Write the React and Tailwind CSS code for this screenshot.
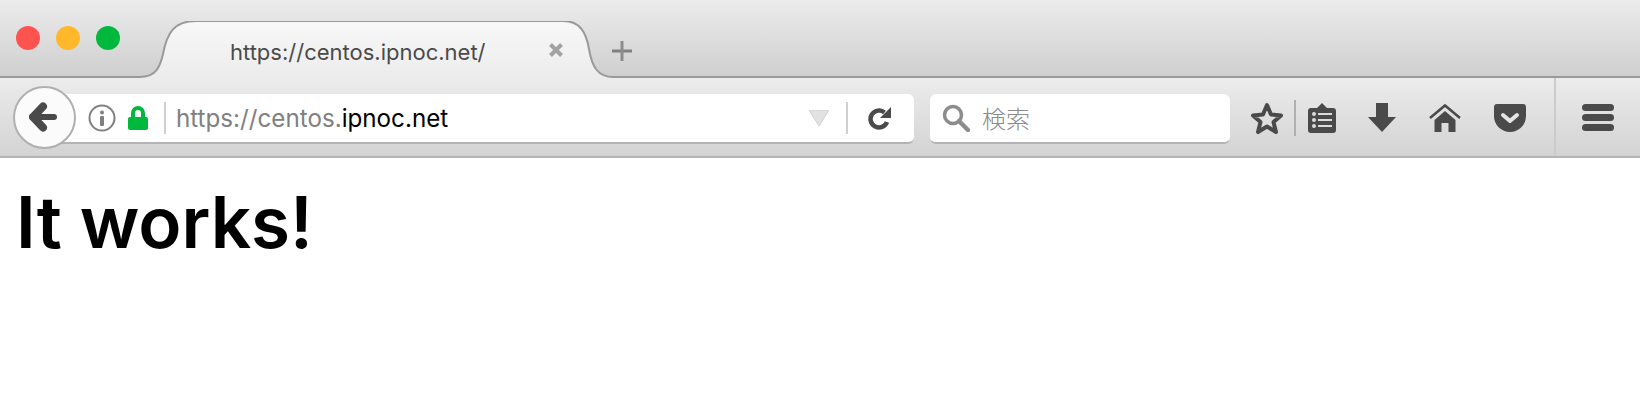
import React from 'react';

const Tab = () => (
  <div className="relative w-[473px] h-[56px] mt-[21px] ml-[20px] flex items-center pl-[90px] shrink-0">
    {/* curved tab shape */}
    <svg className="absolute left-0 top-0" width="473" height="58" viewBox="0 0 473 58" fill="none">
      <defs>
        <linearGradient id="tabFill" x1="0" y1="0" x2="0" y2="1">
          <stop offset="0" stopColor="#f8f8f8" />
          <stop offset="1" stopColor="#ececec" />
        </linearGradient>
      </defs>
      <path d="M0 56 C16 56 20 46 23 33 C27 12 34 0 56 0 L423 0 C439 0 446 10 449 28 C452 46 458 56 473 56 L473 58 L0 58 Z" fill="url(#tabFill)" />
      <path d="M0 56 C16 56 20 46 23 33 C27 12 34 0 56 0 L423 0 C439 0 446 10 449 28 C452 46 458 56 473 56" stroke="#9a9a9a" strokeWidth="2" />
    </svg>
    <span className="relative text-[22px] text-[#4a4a4a] font-['Inter',sans-serif] mt-[6px]">https://centos.ipnoc.net/</span>
    <svg className="absolute left-[408px] top-[21px]" width="16" height="16" viewBox="0 0 16 16">
      <path d="M2.5 2.5 L13.5 13.5 M13.5 2.5 L2.5 13.5" stroke="#a2a2a2" strokeWidth="4" />
    </svg>
  </div>
);

const BackButton = () => (
  <div className="w-[63px] h-[63px] rounded-full bg-[#fbfbfb] border-2 border-[#b0b0b0] flex items-center justify-center relative z-10 shrink-0">
    <svg width="28" height="30" viewBox="0 0 28 30" className="-ml-[3px]">
      <path d="M4 15 L14 4.5 M4 15 L14 25.5" stroke="#4a4a4a" strokeWidth="8" strokeLinecap="round" fill="none" />
      <path d="M6 15 L25 15" stroke="#4a4a4a" strokeWidth="6" strokeLinecap="round" fill="none" />
    </svg>
  </div>
);

const UrlBar = () => (
  <div className="-ml-[21px] mt-[4px] w-[859px] h-[50px] bg-white rounded-r-[6px] border-b-2 border-[#b4b4b4] flex items-center pl-[33px] font-['Inter',sans-serif]">
    <svg width="28" height="28" viewBox="0 0 28 28" className="shrink-0">
      <circle cx="14" cy="14" r="12.5" fill="none" stroke="#808080" strokeWidth="2" />
      <circle cx="14" cy="8.5" r="2" fill="#808080" />
      <rect x="12" y="12" width="4" height="10" rx="1" fill="#808080" />
    </svg>
    <svg width="20" height="24" viewBox="0 0 20 24" className="ml-[12px] shrink-0">
      <path d="M5 12 V7 a5 5 0 0 1 10 0 V12" fill="none" stroke="#00b93c" strokeWidth="4" />
      <rect x="0" y="11" width="20" height="13" rx="2" fill="#00b93c" />
    </svg>
    <div className="w-[2px] h-[32px] bg-[#d0d0d0] ml-[16px] shrink-0" />
    <span className="ml-[10px] mt-[2px] text-[24.2px] text-[#808080]">https://centos.<span className="text-black">ipnoc.net</span></span>
    <svg width="20" height="16" viewBox="0 0 20 16" className="ml-auto shrink-0">
      <path d="M0 0 H20 L10 16 Z" fill="#e2e2e2" stroke="#d0d0d0" strokeWidth="1" />
    </svg>
    <div className="w-[2px] h-[32px] bg-[#d0d0d0] ml-[17px] shrink-0" />
    <svg width="24" height="24" viewBox="0 0 24 24" className="ml-[20px] mr-[22px] shrink-0">
      <path d="M19 16 A8.5 8.5 0 1 1 16.5 6.5" fill="none" stroke="#4a4a4a" strokeWidth="4.5" />
      <path d="M23 1 V12 H12 Z" fill="#4a4a4a" />
    </svg>
  </div>
);

const SearchBar = () => (
  <div className="ml-[16px] mt-[4px] w-[300px] h-[50px] bg-white rounded-[6px] border-b-2 border-[#b4b4b4] flex items-center pl-[12px]">
    <svg width="28" height="28" viewBox="0 0 28 28" className="shrink-0">
      <circle cx="11" cy="11" r="8.5" fill="none" stroke="#8c8c8c" strokeWidth="3.5" />
      <path d="M17 17 L26 26" stroke="#8c8c8c" strokeWidth="4.5" strokeLinecap="round" />
    </svg>
    <span className="ml-[12px] text-[24px] font-light text-[#8c8c8c] font-['Noto_Sans_CJK_JP',sans-serif]">検索</span>
  </div>
);

const Toolbar = () => (
  <div className="h-[80px] bg-gradient-to-b from-[#ececec] to-[#d3d3d3] border-b-2 border-[#b4b4b4] flex items-center pl-[13px]">
    <BackButton />
    <UrlBar />
    <SearchBar />
    <svg width="34" height="32" viewBox="0 0 34 32" className="ml-[20px] mt-[2px] shrink-0">
      <path d="M17 3 L21 12.5 L31 13.5 L23.5 20 L26 30 L17 24.5 L8 30 L10.5 20 L3 13.5 L13 12.5 Z" fill="none" stroke="#4a4a4a" strokeWidth="4" strokeLinejoin="round" />
    </svg>
    <div className="w-[2px] h-[36px] bg-[#b0b0b0] ml-[10px] mt-[2px] shrink-0" />
    <svg width="28" height="30" viewBox="0 0 28 30" className="ml-[12px] mt-[2px] shrink-0">
      <path d="M14 0 L19 5 H25 a3 3 0 0 1 3 3 V27 a3 3 0 0 1 -3 3 H3 a3 3 0 0 1 -3 -3 V8 a3 3 0 0 1 3 -3 H9 Z" fill="#4a4a4a" />
      <circle cx="6" cy="11" r="2" fill="#dcdcdc" />
      <circle cx="6" cy="17" r="2" fill="#dcdcdc" />
      <circle cx="6" cy="23" r="2" fill="#dcdcdc" />
      <rect x="10" y="10" width="14" height="2" fill="#dcdcdc" />
      <rect x="10" y="16" width="14" height="2" fill="#dcdcdc" />
      <rect x="10" y="22" width="14" height="2" fill="#dcdcdc" />
    </svg>
    <svg width="28" height="30" viewBox="0 0 28 30" className="ml-[32px] mt-[2px] shrink-0">
      <path d="M8 0 H20 V14 H28 L14 29 L0 14 H8 Z" fill="#4a4a4a" />
    </svg>
    <svg width="32" height="30" viewBox="0 0 32 30" className="ml-[33px] mt-[2px] shrink-0">
      <path d="M1 15 L16 2.5 L31 15" fill="none" stroke="#4a4a4a" strokeWidth="2.5" />
      <path d="M5.5 17 L16 8 L26.5 17 V29 H19.5 V20 H12.5 V29 H5.5 Z" fill="#4a4a4a" />
    </svg>
    <svg width="32" height="28" viewBox="0 0 32 28" className="ml-[33px] mt-[2px] shrink-0">
      <path d="M3 0 H29 a3 3 0 0 1 3 3 V12 a16 16 0 0 1 -32 0 V3 a3 3 0 0 1 3 -3 Z" fill="#4a4a4a" />
      <path d="M9 11 L16 17 L23 11" fill="none" stroke="#e4e4e4" strokeWidth="4" strokeLinecap="round" strokeLinejoin="round" />
    </svg>
    <div className="w-[2px] h-[78px] bg-[#cbcbcb] ml-[28px] shrink-0" />
    <div className="ml-[26px] w-[32px] flex flex-col gap-[3px] shrink-0">
      <div className="h-[7px] rounded-full bg-[#4a4a4a]" />
      <div className="h-[7px] rounded-full bg-[#4a4a4a]" />
      <div className="h-[7px] rounded-full bg-[#4a4a4a]" />
    </div>
  </div>
);

export default function App() {
  return (
    <div className="w-[1640px] h-[420px] bg-white overflow-hidden">
      <div className="h-[78px] bg-gradient-to-b from-[#ececec] to-[#cfcfcf] border-b-2 border-[#9a9a9a] flex items-start relative">
        <div className="flex gap-[16px] pl-[16px] pt-[26px] shrink-0">
          <div className="w-[24px] h-[24px] rounded-full bg-[#ff5350]" />
          <div className="w-[24px] h-[24px] rounded-full bg-[#ffb829]" />
          <div className="w-[24px] h-[24px] rounded-full bg-[#00b93c]" />
        </div>
        <Tab />
        <svg width="20" height="20" viewBox="0 0 20 20" className="mt-[41px] -ml-[1px] shrink-0">
          <path d="M0 10 H20" stroke="#808080" strokeWidth="3" />
          <path d="M10 0 V20" stroke="#8c8c8c" strokeWidth="3" />
        </svg>
      </div>
      <Toolbar />
      <h1 className="text-[71px] font-semibold text-black pl-[16px] pt-[19px] leading-[90px] font-['Inter',sans-serif]">It works!</h1>
    </div>
  );
}
